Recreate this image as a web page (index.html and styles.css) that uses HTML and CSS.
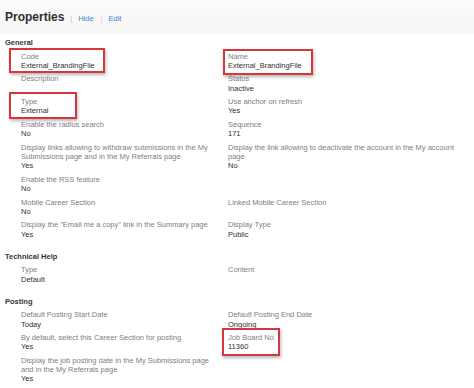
FILE: index.html
```html
<!DOCTYPE html>
<html>
<head>
<meta charset="utf-8">
<link rel="stylesheet" href="styles.css">
</head>
<body>
<div class="page">
  <div class="header">
    <h1 class="title">Properties</h1>
    <span class="sep">|</span>
    <a class="link">Hide</a>
    <span class="sep">|</span>
    <a class="link">Edit</a>
  </div>

  <section class="section first">
    <h2 class="heading">General</h2>
    <div class="grid">
      <div class="field"><div class="label">Code</div><div class="value">External_BrandingFile</div></div>
      <div class="field"><div class="label">Name</div><div class="value">External_BrandingFile</div></div>

      <div class="field"><div class="label">Description</div></div>
      <div class="field"><div class="label">Status</div><div class="value">Inactive</div></div>

      <div class="field"><div class="label">Type</div><div class="value">External</div></div>
      <div class="field"><div class="label">Use anchor on refresh</div><div class="value">Yes</div></div>

      <div class="field"><div class="label">Enable the radius search</div><div class="value">No</div></div>
      <div class="field"><div class="label">Sequence</div><div class="value">171</div></div>

      <div class="field"><div class="label">Display links allowing to withdraw submissions in the My Submissions page and in the My Referrals page</div><div class="value">Yes</div></div>
      <div class="field"><div class="label">Display the link allowing to deactivate the account in the My account page</div><div class="value">No</div></div>

      <div class="field"><div class="label">Enable the RSS feature</div><div class="value">No</div></div>
      <div class="field"></div>

      <div class="field"><div class="label">Mobile Career Section</div><div class="value">No</div></div>
      <div class="field"><div class="label">Linked Mobile Career Section</div></div>

      <div class="field"><div class="label">Display the "Email me a copy" link in the Summary page</div><div class="value">Yes</div></div>
      <div class="field"><div class="label">Display Type</div><div class="value">Public</div></div>
    </div>
  </section>

  <section class="section">
    <h2 class="heading">Technical Help</h2>
    <div class="grid">
      <div class="field"><div class="label">Type</div><div class="value">Default</div></div>
      <div class="field"><div class="label">Content</div></div>
    </div>
  </section>

  <section class="section">
    <h2 class="heading">Posting</h2>
    <div class="grid">
      <div class="field"><div class="label">Default Posting Start Date</div><div class="value">Today</div></div>
      <div class="field"><div class="label">Default Posting End Date</div><div class="value">Ongoing</div></div>

      <div class="field"><div class="label">By default, select this Career Section for posting</div><div class="value">Yes</div></div>
      <div class="field"><div class="label">Job Board No</div><div class="value">11360</div></div>

      <div class="field"><div class="label">Display the job posting date in the My Submissions page and in the My Referrals page</div><div class="value">Yes</div></div>
      <div class="field"></div>
    </div>
  </section>

  <div class="mark mark-code"></div>
  <div class="mark mark-name"></div>
  <div class="mark mark-type"></div>
  <div class="mark mark-board"></div>
</div>
</body>
</html>
```

FILE: styles.css
```css
* { box-sizing: border-box; }

html, body {
  margin: 0;
  padding: 0;
  background: #ffffff;
}

body {
  font-family: "Liberation Sans", Arial, sans-serif;
  color: #333333;
}

.page {
  position: relative;
  width: 474px;
  height: 388px;
  overflow: hidden;
}

.header {
  height: 35px;
  padding: 10px 0 0 5px;
  display: flex;
  align-items: baseline;
  background: linear-gradient(#fbfbfb, #f6f6f6 85%, #fafafa);
}

.title {
  margin: 0 6px 0 0;
  font-size: 12px;
  line-height: 15px;
  font-weight: bold;
  color: #2e2e2e;
}

.sep {
  font-size: 7px;
  color: #c4c4c4;
  margin: 0 6px 0 0;
}

.link {
  font-size: 7.5px;
  color: #3b8ad0;
  margin-right: 7px;
}

.section {
  margin-top: 13.4px;
  padding-left: 5px;
}

.section.first {
  margin-top: 3.4px;
}

.heading {
  margin: 0 0 4px 0;
  font-size: 7.5px;
  line-height: 9.2px;
  font-weight: bold;
  color: #333333;
}

.grid {
  display: grid;
  grid-template-columns: 193px 232px;
  column-gap: 14px;
  row-gap: 4.4px;
  padding-left: 16px;
}

.field {
  font-size: 7.5px;
  line-height: 9.2px;
}

.label {
  color: #808080;
}

.value {
  color: #303030;
}

.mark {
  position: absolute;
  border: 2.5px solid #d7363d;
  box-shadow: 1px 2px 3px rgba(0, 0, 0, 0.28);
}

.mark-code { left: 9px; top: 48px; width: 96px; height: 25px; }
.mark-name { left: 223px; top: 49px; width: 90px; height: 26px; }
.mark-type { left: 9px; top: 92px; width: 68px; height: 27px; }
.mark-board { left: 222px; top: 328px; width: 58px; height: 28px; }
```
